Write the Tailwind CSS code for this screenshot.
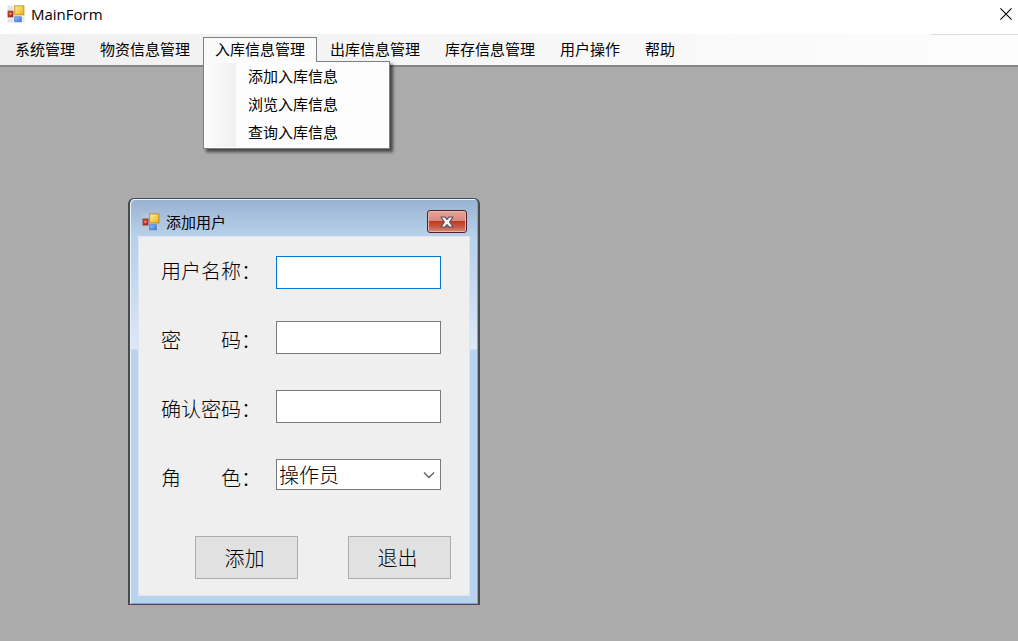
<!DOCTYPE html>
<html lang="zh-CN">
<head>
    <meta charset="UTF-8">
    <meta name="viewport" content="width=device-width, initial-scale=1.0">
    <title>MainForm</title>
    <script src="https://cdn.jsdelivr.net/npm/@tailwindcss/browser@4"></script>
</head>
<body class="min-h-screen flex flex-col bg-[#ababab] text-black font-['Noto_Sans_CJK_SC',sans-serif]">

    <!-- Shared form icon -->
    <svg class="absolute size-0" aria-hidden="true">
        <defs>
            <linearGradient id="g-red" x1="0" y1="0" x2="1" y2="1"><stop offset="0" stop-color="#e0604a"/><stop offset="1" stop-color="#a81c12"/></linearGradient>
            <linearGradient id="g-yellow" x1="0" y1="0" x2="1" y2="1"><stop offset="0" stop-color="#fff0a0"/><stop offset="1" stop-color="#eeb010"/></linearGradient>
            <linearGradient id="g-blue" x1="0" y1="0" x2="1" y2="1"><stop offset="0" stop-color="#9cc6ff"/><stop offset="1" stop-color="#3a72d8"/></linearGradient>
        </defs>
        <symbol id="form-icon" viewBox="0 0 18 18">
            <path d="M0.5 0.5h6v4.5h-6zM0.5 13.5h6v4h-6zM15.5 11.5h2v6h-2z" fill="#c9c9c9" fill-opacity=".5"/>
            <rect x="1" y="6" width="5" height="6" fill="url(#g-red)" stroke="#8e2a20" stroke-width=".8"/>
            <rect x="2.700" y="8" width="1.600" height="1.800" fill="#f2a898"/>
            <rect x="7.700" y=".9" width="9.200" height="9" fill="url(#g-yellow)" stroke="#b98a1c" stroke-width=".9"/>
            <rect x="7.700" y="11.800" width="6.600" height="5" fill="url(#g-blue)" stroke="#4a78c8" stroke-width=".8"/>
        </symbol>
    </svg>

    <!-- Title bar -->
    <header class="h-[34px] flex items-center justify-between bg-white pl-[7px] pr-1.5 pb-1.5">
        <div class="flex items-center gap-1.5">
            <svg class="size-[18px]" aria-hidden="true"><use href="#form-icon"/></svg>
            <h1 class="text-[15px] leading-5 font-['Open_Sans',sans-serif]">MainForm</h1>
        </div>
        <button type="button" aria-label="关闭">
            <svg class="size-3" viewBox="0 0 12 12" fill="none" stroke="#000" stroke-width="1.1" aria-hidden="true"><path d="M.4.4l11.2 11.2M11.6.4L.4 11.6"/></svg>
        </button>
    </header>

    <!-- Menu bar -->
    <nav class="relative z-10 h-[33px] pt-[3px] pl-[3px] bg-linear-to-r from-[#f0f0f0] to-[#fdfdfd] border-b-2 border-[#868686]">
        <span class="absolute top-0 right-0 w-[87px] h-px bg-[#dcdcdc]"></span>
        <ul class="flex gap-px text-[15px] leading-[22px] whitespace-nowrap">
            <li><button type="button" class="block px-[11px] border border-transparent">系统管理</button></li>
            <li><button type="button" class="block px-[11px] border border-transparent">物资信息管理</button></li>
            <li class="relative">
                <button type="button" class="block relative z-10 px-[11px] pb-0.5 border border-b-0 border-[#808080] bg-[#fafafa]" aria-expanded="true">入库信息管理</button>
                <ul class="absolute left-0 top-6 w-[187px] p-px bg-[#fdfdfd] border border-[#808080] shadow-[3px_3px_3px_rgba(0,0,0,0.6)] leading-[26px]">
                    <li class="flex h-7">
                        <span class="w-[31px] bg-linear-to-r from-[#fcfcfc] to-[#f0f0f0]"></span>
                        <button type="button" class="flex-1 pb-0.5 pl-3 text-left">添加入库信息</button>
                    </li>
                    <li class="flex h-7">
                        <span class="w-[31px] bg-linear-to-r from-[#fcfcfc] to-[#f0f0f0]"></span>
                        <button type="button" class="flex-1 pb-0.5 pl-3 text-left">浏览入库信息</button>
                    </li>
                    <li class="flex h-7">
                        <span class="w-[31px] bg-linear-to-r from-[#fcfcfc] to-[#f0f0f0]"></span>
                        <button type="button" class="flex-1 pb-0.5 pl-3 text-left">查询入库信息</button>
                    </li>
                </ul>
            </li>
            <li><button type="button" class="block px-[11px] border border-transparent">出库信息管理</button></li>
            <li><button type="button" class="block px-[11px] border border-transparent">库存信息管理</button></li>
            <li><button type="button" class="block px-[11px] border border-transparent">用户操作</button></li>
            <li><button type="button" class="block px-[11px] border border-transparent">帮助</button></li>
        </ul>
    </nav>

    <!-- MDI area -->
    <main class="relative flex-1">
        <section role="dialog" aria-labelledby="dlg-title" class="absolute left-32 top-[131px] w-[352px] border-x-2 border-y border-[#454a4d] rounded-t-md px-2 pb-2 bg-[linear-gradient(#99b2d1,#b9d1ea_38px,#bdd3ed_60px,#dce8f7_150px,#bad2ee_151px)] shadow-[inset_1px_1px_0_#e8f1fa,inset_-1px_-1px_0_#3cc4e0]">
            <div class="h-[37px] flex items-center justify-between pt-2 pl-1 pr-[3px]">
                <div class="flex items-center gap-1.5">
                    <svg class="size-[18px]" aria-hidden="true"><use href="#form-icon"/></svg>
                    <h2 id="dlg-title" class="text-[15px] leading-5">添加用户</h2>
                </div>
                <button type="button" aria-label="关闭" class="w-10 h-[23px] flex items-center justify-center rounded-[3px] border border-[#541c26] bg-[linear-gradient(#e6a59b,#d98a7e_45%,#bb3a22_50%,#c65a45_75%,#d98c7c)] shadow-[inset_0_0_0_1px_#eab5ac]">
                    <svg class="w-3.5 h-3" viewBox="0 0 14 12" aria-hidden="true"><path d="M1 1h4l2 2.300L9 1h4L9.600 6l3.400 5H9L7 8.700 5 11H1l3.400-5z" fill="#f4f4f4" stroke="#5a5466" stroke-width="1.200" stroke-linejoin="round"/></svg>
                </button>
            </div>

            <form class="bg-[#efefef] border border-[#dbe6f2] pt-[15px] pb-4 text-xl font-light">
                <div class="flex flex-col gap-8 pl-[22px] pr-7">
                    <div class="flex h-[37px]">
                        <label for="username" class="w-[115px] self-center leading-7">用户名称：</label>
                        <input id="username" type="text" class="min-w-0 flex-1 h-[33px] self-end px-1 bg-white border border-[#0078d7] outline-none">
                    </div>
                    <div class="flex h-[37px]">
                        <label for="password" class="w-[115px] self-center leading-7">密　　码：</label>
                        <input id="password" type="password" class="min-w-0 flex-1 h-[33px] px-1 bg-white border border-[#7a7a7a] outline-none">
                    </div>
                    <div class="flex h-[37px]">
                        <label for="confirm" class="w-[115px] self-center leading-7">确认密码：</label>
                        <input id="confirm" type="password" class="min-w-0 flex-1 h-[33px] px-1 bg-white border border-[#7a7a7a] outline-none">
                    </div>
                    <div class="flex h-[37px]">
                        <label for="role" class="w-[115px] self-center leading-7">角　　色：</label>
                        <div class="relative flex-1 h-[31px]">
                            <select id="role" class="appearance-none block w-full h-full pl-0.5 leading-7 bg-white border border-[#7a7a7a] outline-none">
                                <option>操作员</option>
                            </select>
                            <svg class="absolute right-1.5 top-3 w-3 h-2 pointer-events-none" viewBox="0 0 12 8" fill="none" stroke="#606060" stroke-width="1.300" aria-hidden="true"><path d="M1 1.500l5 5 5-5"/></svg>
                        </div>
                    </div>
                </div>
                <div class="flex justify-end gap-[50px] mt-10 pr-[18px]">
                    <button type="submit" class="w-[103px] h-[43px] pr-1 bg-[#e1e1e1] border border-[#adadad]">添加</button>
                    <button type="button" class="w-[103px] h-[43px] pr-1 bg-[#e1e1e1] border border-[#adadad]">退出</button>
                </div>
            </form>
        </section>
    </main>
</body>
</html>
